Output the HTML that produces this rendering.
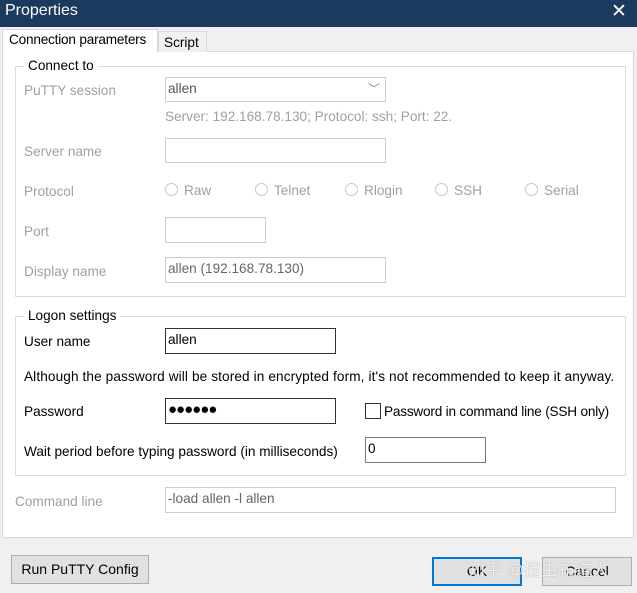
<!DOCTYPE html>
<html><head><meta charset="utf-8"><style>
*{box-sizing:border-box;margin:0;padding:0}
body{width:637px;height:593px;background:#f0f0f0;font-family:"Liberation Sans","Noto Sans CJK SC",sans-serif;font-size:13.6px;color:#000;position:relative;overflow:hidden}
.a{position:absolute;white-space:nowrap}
.g{color:#a0a0a0}
.box{position:absolute;background:#fff;border:1px solid #ccc;padding:3px 0 0 2px}
.dark{border:1px solid #333}
.grp{position:absolute;border:1px solid #dcdcdc}
.rad{position:absolute;width:13px;height:13px;border:1px solid #c8c8c8;border-radius:50%;background:#fff}
.btn{position:absolute;background:#e1e1e1;border:1px solid #adadad;text-align:center;line-height:27px;font-size:14px}
</style></head><body>
<div class="a" style="left:0;top:0;width:637px;height:27px;background:#1b3a5e"></div>
<div class="a" style="left:5px;top:2px;color:#fff;font-size:16px">Properties</div>
<div class="a" style="left:611px;top:0px;color:#fff;font-size:19px">✕</div>
<div class="a" style="left:2px;top:51px;width:632px;height:487px;background:#fff;border:1px solid #d9d9d9"></div>
<div class="a" style="left:2px;top:29px;width:156px;height:24px;background:#fff;border:1px solid #d9d9d9;border-bottom:none"></div>
<div class="a" style="left:9px;top:32px;letter-spacing:-0.2px">Connection parameters</div>
<div class="a" style="left:158px;top:31px;width:49px;height:21px;background:#f0f0f0;border:1px solid #d9d9d9;border-bottom:none"></div>
<div class="a" style="left:164px;top:35px">Script</div>

<div class="grp" style="left:15px;top:66px;width:611px;height:231px"></div>
<div class="a" style="left:24px;top:58px;background:#fff;padding:0 4px">Connect to</div>
<div class="a g" style="left:24px;top:83px">PuTTY session</div>
<div class="box" style="left:165px;top:77px;width:221px;height:25px;color:#555">allen</div>
<div class="a" style="left:368px;top:80px;color:#888;font-size:12px">﹀</div>
<div class="a g" style="left:165px;top:109px">Server: 192.168.78.130; Protocol: ssh; Port: 22.</div>
<div class="a g" style="left:24px;top:144px">Server name</div>
<div class="box" style="left:165px;top:138px;width:221px;height:25px"></div>
<div class="a g" style="left:24px;top:184px">Protocol</div>
<div class="rad" style="left:165px;top:183px"></div><div class="a g" style="left:184px;top:183px">Raw</div>
<div class="rad" style="left:255px;top:183px"></div><div class="a g" style="left:274px;top:183px">Telnet</div>
<div class="rad" style="left:345px;top:183px"></div><div class="a g" style="left:364px;top:183px">Rlogin</div>
<div class="rad" style="left:435px;top:183px"></div><div class="a g" style="left:454px;top:183px">SSH</div>
<div class="rad" style="left:525px;top:183px"></div><div class="a g" style="left:544px;top:183px">Serial</div>
<div class="a g" style="left:24px;top:224px">Port</div>
<div class="box" style="left:165px;top:217px;width:101px;height:26px"></div>
<div class="a g" style="left:24px;top:264px">Display name</div>
<div class="box" style="left:165px;top:257px;width:221px;height:26px;color:#666">allen (192.168.78.130)</div>

<div class="grp" style="left:15px;top:316px;width:611px;height:160px"></div>
<div class="a" style="left:24px;top:308px;background:#fff;padding:0 4px">Logon settings</div>
<div class="a" style="left:24px;top:334px">User name</div>
<div class="box dark" style="left:165px;top:328px;width:171px;height:26px">allen</div>
<div class="a" style="left:24px;top:369px;letter-spacing:0.12px">Although the password will be stored in encrypted form, it's not recommended to keep it anyway.</div>
<div class="a" style="left:24px;top:404px">Password</div>
<div class="box dark" style="left:165px;top:398px;width:171px;height:26px;font-size:15px;letter-spacing:-1px;padding-top:2px">●●●●●●</div>
<div class="a" style="left:365px;top:403px;width:16px;height:16px;border:1px solid #333;background:#fff"></div>
<div class="a" style="left:384px;top:404px;letter-spacing:-0.2px">Password in command line (SSH only)</div>
<div class="a" style="left:24px;top:444px">Wait period before typing password (in milliseconds)</div>
<div class="box" style="left:365px;top:437px;width:121px;height:26px;border-color:#7a7a7a">0</div>

<div class="a g" style="left:15px;top:494px">Command line</div>
<div class="box" style="left:165px;top:487px;width:451px;height:26px;color:#666">-load allen -l allen</div>

<div class="btn" style="left:11px;top:555px;width:138px;height:29px">Run PuTTY Config</div>
<div class="btn" style="left:432px;top:557px;width:90px;height:29px;border:2px solid #0078d7;line-height:25px">OK</div>
<div class="btn" style="left:542px;top:557px;width:90px;height:29px">Cancel</div>
<div class="a" style="left:468px;top:556px;color:rgba(255,255,255,0.85);font-size:17px;text-shadow:0 0 1px #888">知乎 @捉虫布道人</div>
</body></html>
